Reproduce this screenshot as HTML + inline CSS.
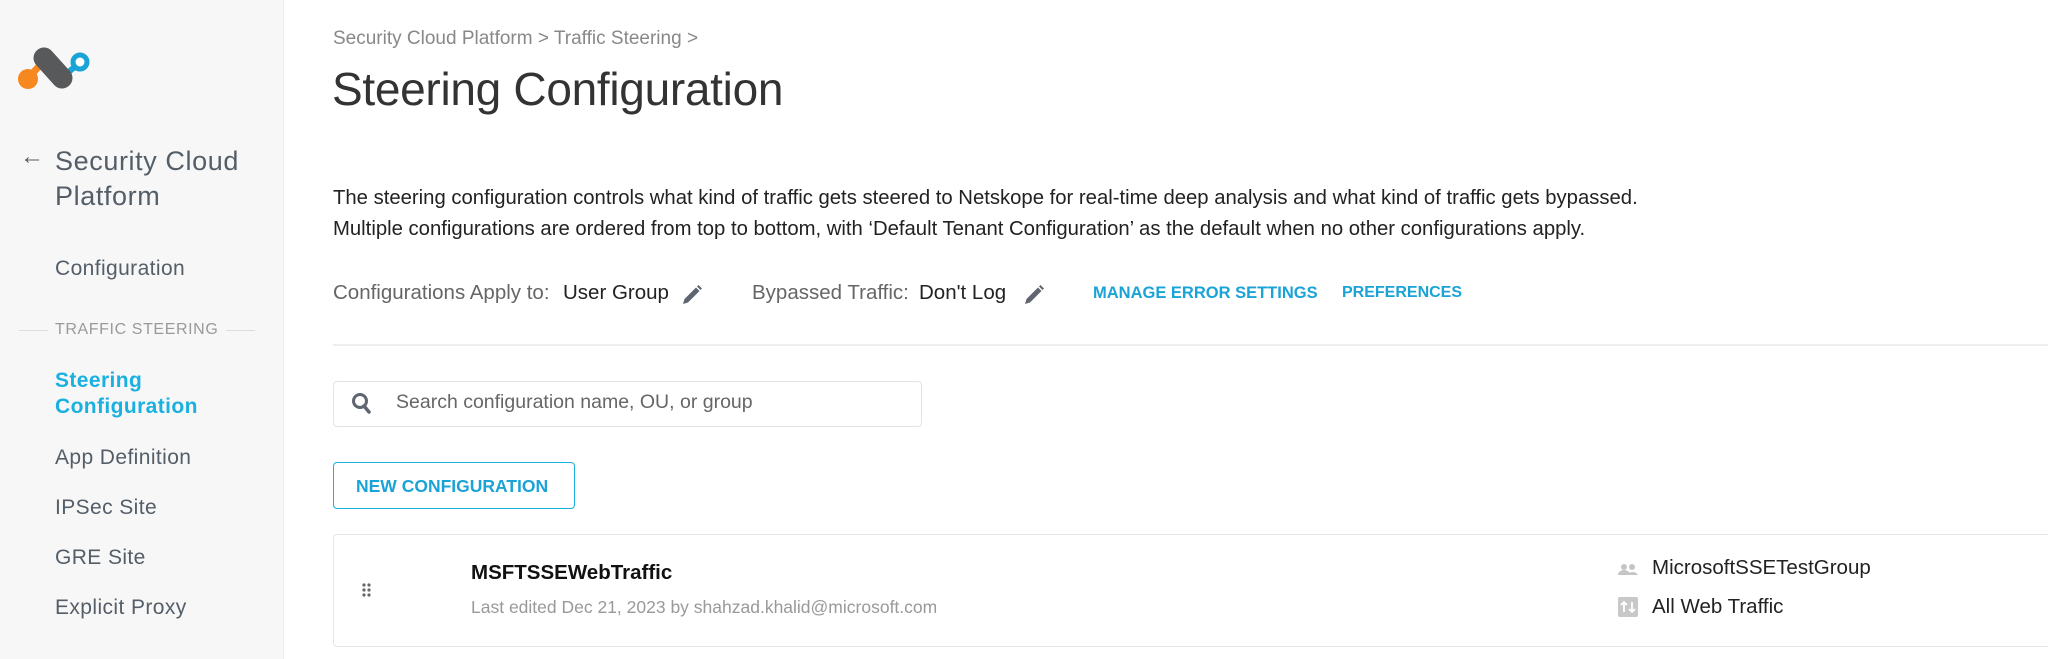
<!DOCTYPE html>
<html><head><meta charset="utf-8"><style>
*{margin:0;padding:0;box-sizing:border-box}
body{width:2048px;height:659px;overflow:hidden;background:#fff;font-family:"Liberation Sans",sans-serif;position:relative}
.sb{position:absolute;left:0;top:0;width:284px;height:659px;background:#f7f7f7;border-right:1px solid #ececec}
.a{position:absolute;white-space:nowrap}
.nav{color:#545e68;font-size:21px;left:55px;letter-spacing:.4px}
.main{color:#222}
.blue{color:#1aa3d6}
</style></head><body>
<div class="sb">
<svg class="a" style="left:0;top:30px" width="120" height="70" viewBox="0 30 120 70">
<line x1="30" y1="76" x2="43" y2="62" stroke="#f7871f" stroke-width="7"/>
<circle cx="28" cy="79" r="10" fill="#f7871f"/>
<line x1="64" y1="76" x2="78" y2="64" stroke="#1aa3d6" stroke-width="6"/>
<circle cx="80" cy="62" r="7" fill="#fff" stroke="#1aa3d6" stroke-width="5"/>
<line x1="44" y1="58" x2="62" y2="78" stroke="#58595b" stroke-width="21" stroke-linecap="round"/>
</svg>
<div class="a" style="left:20px;top:143px;font-size:24px;color:#545e68">&#8592;</div>
<div class="a nav" style="top:144px;font-size:27px;line-height:35px;letter-spacing:.6px">Security Cloud<br>Platform</div>
<div class="a nav" style="top:257px">Configuration</div>
<div class="a" style="left:19px;top:330px;width:29px;border-top:1px solid #ddd"></div>
<div class="a" style="left:55px;top:321px;font-size:16px;color:#9a9a9a;letter-spacing:.6px">TRAFFIC STEERING</div>
<div class="a" style="left:226px;top:330px;width:29px;border-top:1px solid #ddd"></div>
<div class="a nav" style="top:368px;color:#1ab0e0;font-weight:bold;line-height:26px">Steering<br>Configuration</div>
<div class="a nav" style="top:446px">App Definition</div>
<div class="a nav" style="top:496px">IPSec Site</div>
<div class="a nav" style="top:546px">GRE Site</div>
<div class="a nav" style="top:596px">Explicit Proxy</div>
</div>
<div class="a" style="left:333px;top:28px;font-size:19px;color:#888">Security Cloud Platform &gt; Traffic Steering &gt;</div>
<div class="a" style="left:332px;top:62px;font-size:46px;color:#333;letter-spacing:-.3px">Steering Configuration</div>
<div class="a main" style="left:333px;top:183px;font-size:20.3px;line-height:31px">The steering configuration controls what kind of traffic gets steered to Netskope for real-time deep analysis and what kind of traffic gets bypassed.<br>Multiple configurations are ordered from top to bottom, with ‘Default Tenant Configuration’ as the default when no other configurations apply.</div>
<div class="a" style="left:333px;top:281px;font-size:20.5px;color:#666">Configurations Apply to:</div>
<div class="a main" style="left:563px;top:281px;font-size:20.5px">User Group</div>
<svg class="a" style="left:680px;top:283px" width="24" height="24" viewBox="0 0 24 24"><path d="M3 21l1.5-5L16 4.5l3.5 3.5L8 19.5z" fill="#5f6670"/><path d="M17 3.5l1.5-1.5 3.5 3.5-1.5 1.5z" fill="#5f6670"/></svg>
<div class="a" style="left:752px;top:281px;font-size:20.5px;color:#666">Bypassed Traffic:</div>
<div class="a main" style="left:919px;top:281px;font-size:20.5px">Don't Log</div>
<svg class="a" style="left:1022px;top:283px" width="24" height="24" viewBox="0 0 24 24"><path d="M3 21l1.5-5L16 4.5l3.5 3.5L8 19.5z" fill="#5f6670"/><path d="M17 3.5l1.5-1.5 3.5 3.5-1.5 1.5z" fill="#5f6670"/></svg>
<div class="a blue" style="left:1093px;top:284px;font-size:16.5px;font-weight:bold">MANAGE ERROR SETTINGS</div>
<div class="a blue" style="left:1342px;top:284px;font-size:16px;font-weight:bold">PREFERENCES</div>
<div class="a" style="left:333px;top:344px;width:1715px;border-top:2px solid #eee"></div>
<div class="a" style="left:333px;top:381px;width:589px;height:46px;border:1.5px solid #e3e3e3;border-radius:4px"></div>
<svg class="a" style="left:351px;top:392px" width="22" height="24" viewBox="0 0 22 24"><circle cx="9" cy="9" r="6.5" fill="none" stroke="#5f6670" stroke-width="3"/><path d="M13 14l5 6" stroke="#5f6670" stroke-width="3.5" stroke-linecap="round"/></svg>
<div class="a" style="left:396px;top:391px;font-size:19.5px;color:#666">Search configuration name, OU, or group</div>
<div class="a" style="left:333px;top:462px;width:242px;height:47px;border:1.5px solid #1ab0e0;border-radius:4px"></div>
<div class="a blue" style="left:356px;top:476px;font-size:17.5px;font-weight:bold">NEW CONFIGURATION</div>
<div class="a" style="left:333px;top:534px;width:1730px;height:113px;border:1.5px solid #e6e6e6;border-radius:4px"></div>
<svg class="a" style="left:361px;top:582px" width="12" height="16"><g fill="#666"><circle cx="3" cy="3" r="1.6"/><circle cx="8" cy="3" r="1.6"/><circle cx="3" cy="8" r="1.6"/><circle cx="8" cy="8" r="1.6"/><circle cx="3" cy="13" r="1.6"/><circle cx="8" cy="13" r="1.6"/></g></svg>
<div class="a main" style="left:471px;top:561px;font-size:20.5px;font-weight:bold;color:#111">MSFTSSEWebTraffic</div>
<div class="a" style="left:471px;top:597px;font-size:17.5px;color:#999">Last edited Dec 21, 2023 by shahzad.khalid@microsoft.com</div>
<svg class="a" style="left:1618px;top:563px" width="20" height="14"><g fill="#c5c5c5"><circle cx="6" cy="4" r="3"/><path d="M0 12a6 5 0 0 1 12 0z"/><circle cx="14" cy="4" r="3"/><path d="M9 12a6 5 0 0 1 11 0z"/></g></svg>
<div class="a main" style="left:1652px;top:556px;font-size:20.5px">MicrosoftSSETestGroup</div>
<svg class="a" style="left:1618px;top:597px" width="20" height="20"><rect width="20" height="20" rx="2" fill="#c8c8c8"/><path d="M6 15V5M3 8l3-3 3 3M14 5v10M11 12l3 3 3-3" stroke="#fff" stroke-width="1.8" fill="none"/></svg>
<div class="a main" style="left:1652px;top:595px;font-size:20.5px">All Web Traffic</div>
</body></html>
